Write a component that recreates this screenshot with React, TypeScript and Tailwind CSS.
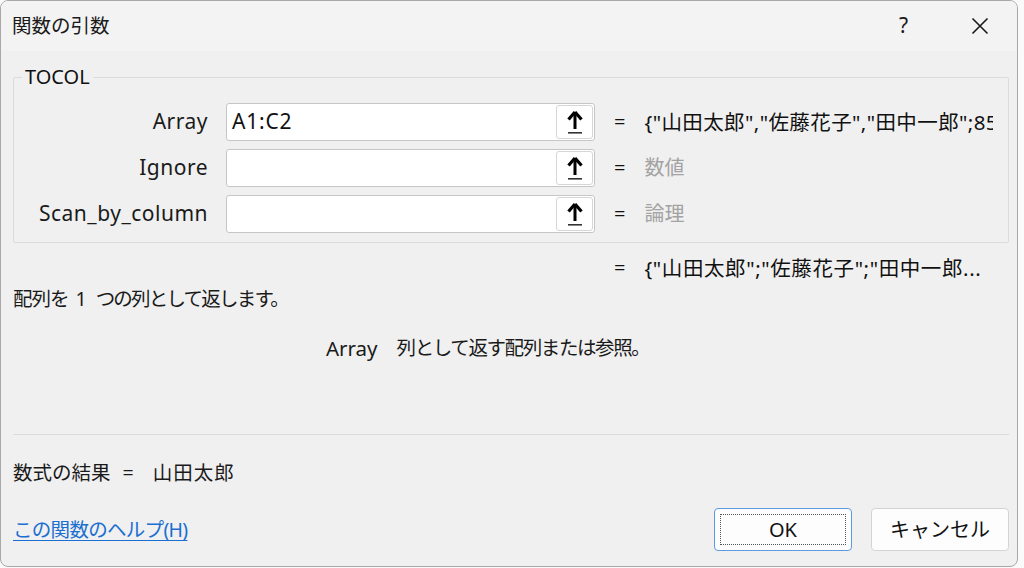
import React from "react";

const font = { fontFamily: '"Noto Sans", "Noto Sans CJK JP", sans-serif' };

function ArrowBtn() {
  return (
    <div className="ml-auto mr-[1px] flex h-[34px] w-[37px] shrink-0 items-center justify-center rounded-[3px] border border-[#d6d6d6] bg-white">
      <svg width="20" height="28" viewBox="0 0 20 28">
        <path d="M10 4 L3.5 11.5 M10 4 L16.5 11.5" stroke="#000" strokeWidth="3.2" fill="none" strokeLinecap="butt" />
        <path d="M10 5 V21" stroke="#000" strokeWidth="3" fill="none" />
        <rect x="3" y="24" width="14" height="1.6" fill="#333" />
      </svg>
    </div>
  );
}

function Row({ label, value, mt }: { label: string; value: string; mt?: boolean }) {
  return (
    <div className={`flex h-[38px] items-center ${mt ? "mt-[8px]" : ""}`}>
      <div className="w-[194px] text-right text-[21px] tracking-[0.5px] text-[#1a1a1a]">{label}</div>
      <div className="ml-[18px] flex h-[38px] w-[369px] items-center rounded-[3px] border border-[#c6c6c6] bg-white">
        <span className="pl-[5px] text-[21px] tracking-[0.8px] text-[#111]">{value}</span>
        <ArrowBtn />
      </div>
    </div>
  );
}

export default function App() {
  return (
    <div className="h-[568px] w-[1024px] overflow-hidden bg-[#fafafa]" style={font}>
      <div className="flex h-[567px] w-[1018px] flex-col overflow-hidden rounded-[8px] border border-[#a8a8a8] bg-[#f0f0f0]">
        <div className="flex h-[50px] shrink-0 items-center bg-[#f3f3f3] pl-[11px]">
          <span className="text-[19.5px] text-[#1a1a1a]">関数の引数</span>
          <span className="ml-auto mr-[63px] text-[21px] text-[#1a1a1a]">?</span>
          <svg width="18" height="18" viewBox="0 0 18 18" className="mr-[28px]">
            <path d="M1.5 1.5 L16.5 16.5 M16.5 1.5 L1.5 16.5" stroke="#1a1a1a" strokeWidth="1.6" />
          </svg>
        </div>
        <div className="flex flex-1 flex-col pl-[12px] pr-[8px]">
          <fieldset className="mt-[12px] rounded-[2px] border border-[#dcdcdc] pb-[9px]">
            <legend className="ml-[8px] px-[3px] text-[20px] leading-[28px] text-[#111]">TOCOL</legend>
            <div className="mt-[12px] flex">
              <div className="flex flex-col">
                <Row label="Array" value="A1:C2" />
                <Row label="Ignore" value="" mt />
                <Row label="Scan_by_column" value="" mt />
              </div>
              <div className="flex flex-col">
                <div className="flex h-[38px] items-center">
                  <span className="ml-[19px] text-[20px] text-[#111]">=</span>
                  <span className="ml-[19px] w-[349px] overflow-hidden whitespace-nowrap text-[20.5px] tracking-[0.4px] text-[#111]">{'{"山田太郎","佐藤花子","田中一郎";85,92,78}'}</span>
                </div>
                <div className="mt-[8px] flex h-[38px] items-center">
                  <span className="ml-[19px] text-[20px] text-[#111]">=</span>
                  <span className="ml-[19px] text-[20px] text-[#a3a3a3]">数値</span>
                </div>
                <div className="mt-[8px] flex h-[38px] items-center">
                  <span className="ml-[19px] text-[20px] text-[#111]">=</span>
                  <span className="ml-[19px] text-[20px] text-[#a3a3a3]">論理</span>
                </div>
              </div>
            </div>
          </fieldset>
          <div className="mt-[8px] flex h-[34px] items-center">
            <span className="ml-[601px] text-[20px] text-[#111]">=</span>
            <span className="ml-[19px] whitespace-nowrap text-[20.5px] tracking-[0.6px] text-[#111]">{'{"山田太郎";"佐藤花子";"田中一郎...'}</span>
          </div>
          <div className="flex h-[28px] items-center text-[19.5px] text-[#1a1a1a]">
            <span className="tracking-[-1px]">配列を</span>
            <span className="ml-[7px]">1</span>
            <span className="ml-[9px] tracking-[-1.8px]">つの列として返します。</span>
          </div>
          <div className="mt-[21px] flex h-[28px] items-center text-[19.5px] text-[#1a1a1a]">
            <span className="ml-[313px] text-[20.5px]">Array</span>
            <span className="ml-[19px] tracking-[-1.4px]">列として返す配列または参照。</span>
          </div>
          <div className="mt-[72px] h-px w-full bg-[#dcdcdc]" />
          <div className="mt-[24px] flex h-[28px] items-center text-[19.5px] text-[#1a1a1a]">
            <span>数式の結果</span>
            <span className="ml-[12px]">=</span>
            <span className="ml-[19px] tracking-[1px]">山田太郎</span>
          </div>
          <div className="mt-[21px] flex h-[43px] items-center">
            <a className="text-[19.5px] tracking-[-0.7px] text-[#1a6fd0] underline underline-offset-[3px]">この関数のヘルプ(H)</a>
            <button className="ml-auto flex h-[43px] w-[138px] shrink-0 items-center justify-center rounded-[4px] border border-[#5b9be0] bg-[#fdfdfd] p-[5px]">
              <span className="flex h-full w-full items-center justify-center border border-dotted border-[#555] text-[20px] text-[#111]">OK</span>
            </button>
            <button className="ml-[19px] flex h-[43px] w-[138px] shrink-0 items-center justify-center rounded-[4px] border border-[#d4d4d4] bg-[#fdfdfd] text-[20px] text-[#111]">キャンセル</button>
          </div>
        </div>
      </div>
    </div>
  );
}
